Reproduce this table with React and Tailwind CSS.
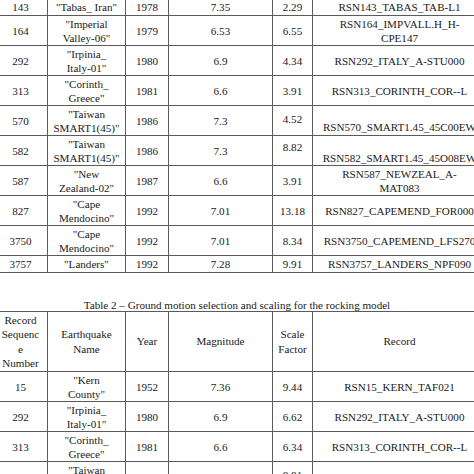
import React from "react";

const COLS = "grid grid-cols-[54px_78px_43px_104px_40px_174px]";

const t1 = [
  { h: "h-[17px]", c: ["143", ['"Tabas_ Iran"'], "1978", "7.35", "2.29", ["RSN143_TABAS_TAB-L1"]] },
  { h: "h-[30px]", c: ["164", ['"Imperial', 'Valley-06"'], "1979", "6.53", "6.55", ["RSN164_IMPVALL.H_H-", "CPE147"]] },
  { h: "h-[30px]", c: ["292", ['"Irpinia_', 'Italy-01"'], "1980", "6.9", "4.34", ["RSN292_ITALY_A-STU000"]] },
  { h: "h-[30px]", c: ["313", ['"Corinth_', 'Greece"'], "1981", "6.6", "3.91", ["RSN313_CORINTH_COR--L"]] },
  { h: "h-[30px]", c: ["570", ['"Taiwan', 'SMART1(45)"'], "1986", "7.3", "4.52", ["RSN570_SMART1.45_45C00EW"]], sf: "pb-[4px]", rc: "pt-[13px]" },
  { h: "h-[30px]", c: ["582", ['"Taiwan', 'SMART1(45)"'], "1986", "7.3", "8.82", ["RSN582_SMART1.45_45O08EW"]], sf: "pb-[8px]", rc: "pt-[14px]" },
  { h: "h-[30px]", c: ["587", ['"New', 'Zealand-02"'], "1987", "6.6", "3.91", ["RSN587_NEWZEAL_A-", "MAT083"]] },
  { h: "h-[30px]", c: ["827", ['"Cape', 'Mendocino"'], "1992", "7.01", "13.18", ["RSN827_CAPEMEND_FOR000"]] },
  { h: "h-[30px]", c: ["3750", ['"Cape', 'Mendocino"'], "1992", "7.01", "8.34", ["RSN3750_CAPEMEND_LFS270"]] },
  { h: "h-[17px]", c: ["3757", ['"Landers"'], "1992", "7.28", "9.91", ["RSN3757_LANDERS_NPF090"]] },
];

const t2 = [
  { h: "h-[30px]", c: ["15", ['"Kern', 'County"'], "1952", "7.36", "9.44", ["RSN15_KERN_TAF021"]] },
  { h: "h-[30px]", c: ["292", ['"Irpinia_', 'Italy-01"'], "1980", "6.9", "6.62", ["RSN292_ITALY_A-STU000"]] },
  { h: "h-[30px]", c: ["313", ['"Corinth_', 'Greece"'], "1981", "6.6", "6.34", ["RSN313_CORINTH_COR--L"]] },
  { h: "h-[30px]", c: ["570", ['"Taiwan', 'SMART1(45)"'], "1986", "7.3", "8.81", [""]], sf: "pb-[4px]" },
];

function Lines({ v }) {
  const arr = Array.isArray(v) ? v : [v];
  return (
    <span className="whitespace-nowrap">
      {arr.map((l, i) => (
        <React.Fragment key={i}>
          {i > 0 && <br />}
          {l}
        </React.Fragment>
      ))}
    </span>
  );
}

function Row({ r }) {
  return (
    <div className={`${COLS} ${r.h} border-b border-[#5a5a5a]`}>
      {r.c.map((v, i) => {
        let extra = "";
        if (i === 4 && r.sf) extra = r.sf;
        if (i === 5 && r.rc) extra = r.rc;
        return (
          <div
            key={i}
            className={`flex items-center justify-center text-center border-r border-[#5a5a5a] ${extra}`}
          >
            <Lines v={v} />
          </div>
        );
      })}
    </div>
  );
}

export default function App() {
  return (
    <div className="w-[474px] h-[474px] overflow-hidden bg-white text-[#1a1a1a] font-['Liberation_Serif',serif] text-[11.1px] leading-[14px]">
      <div className="ml-[-6px] mt-[-1px] w-[493px]">
        {t1.map((r, i) => (
          <Row key={i} r={r} />
        ))}
      </div>
      <div className="h-[38px] flex items-end justify-center whitespace-nowrap leading-[12px]">
        Table 2 – Ground motion selection and scaling for the rocking model
      </div>
      <div className="ml-[-6px] w-[493px] border-t border-[#5a5a5a]">
        <div className={`${COLS} h-[60px] border-b border-[#5a5a5a]`}>
          {[
            ["Record", "Sequenc", "e", "Number"],
            ["Earthquake", "Name"],
            ["Year"],
            ["Magnitude"],
            ["Scale", "Factor"],
            ["Record"],
          ].map((v, i) => (
            <div
              key={i}
              className="flex items-center justify-center text-center border-r border-[#5a5a5a] leading-[14.5px]"
            >
              <Lines v={v} />
            </div>
          ))}
        </div>
        {t2.map((r, i) => (
          <Row key={i} r={r} />
        ))}
      </div>
    </div>
  );
}
